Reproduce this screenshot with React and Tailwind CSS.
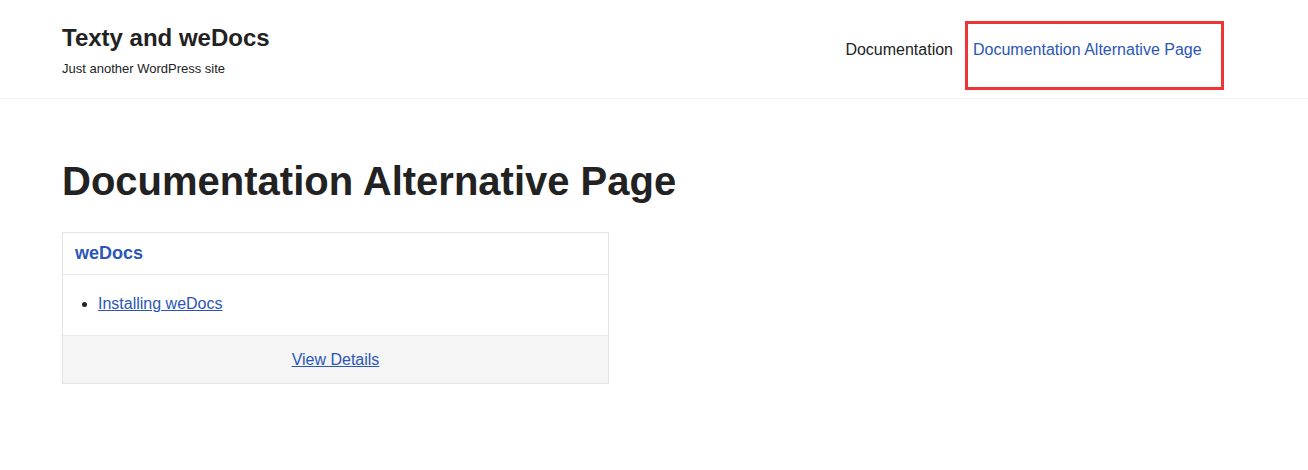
export default function App() {
  return (
    <div className="min-h-[470px] bg-white text-[#222222]" style={{ fontFamily: '"Liberation Sans", Arial, sans-serif' }}>
      <header className="border-b border-[#f3f3f3]">
        <div className="flex h-[98px] items-start justify-between pl-[62px] pr-[84px]">
          <div className="pt-[24px]">
            <div className="text-[24px] font-bold leading-[28px] text-[#222222]">Texty and weDocs</div>
            <div className="mt-[9px] text-[13px] leading-[16px] text-[#222222]">Just another WordPress site</div>
          </div>
          <nav className="flex items-start pt-[21px]">
            <a className="mt-[19px] mr-[12px] text-[16px] leading-[20px] text-[#222222]">Documentation</a>
            <div className="h-[69px] w-[259px] border-[3px] border-[#ee3535] pl-[5px] pt-[14px]">
              <a className="text-[16px] leading-[20px] text-[#2b56b8]">Documentation Alternative Page</a>
            </div>
          </nav>
        </div>
      </header>
      <main className="pl-[62px] pt-[58px]">
        <h1 className="text-[40px] font-bold leading-[48px] text-[#222222]">Documentation Alternative Page</h1>
        <div className="mt-[27px] w-[547px] border border-[#e4e4e4]">
          <div className="h-[42px] border-b border-[#e9e9e9] px-[12px] pt-[9px]">
            <h3 className="text-[18px] font-bold leading-[22px] text-[#2b56b8]">weDocs</h3>
          </div>
          <div className="h-[61px] border-b border-[#e9e9e9] pl-[35px] pt-[19px]">
            <ul className="list-disc">
              <li className="text-[16px] leading-[20px] marker:text-[#222222]">
                <a className="text-[#2b56b8] underline">Installing weDocs</a>
              </li>
            </ul>
          </div>
          <div className="flex h-[47px] items-center justify-center bg-[#f5f5f5]">
            <a className="text-[16px] leading-[20px] text-[#2b56b8] underline">View Details</a>
          </div>
        </div>
      </main>
    </div>
  );
}
